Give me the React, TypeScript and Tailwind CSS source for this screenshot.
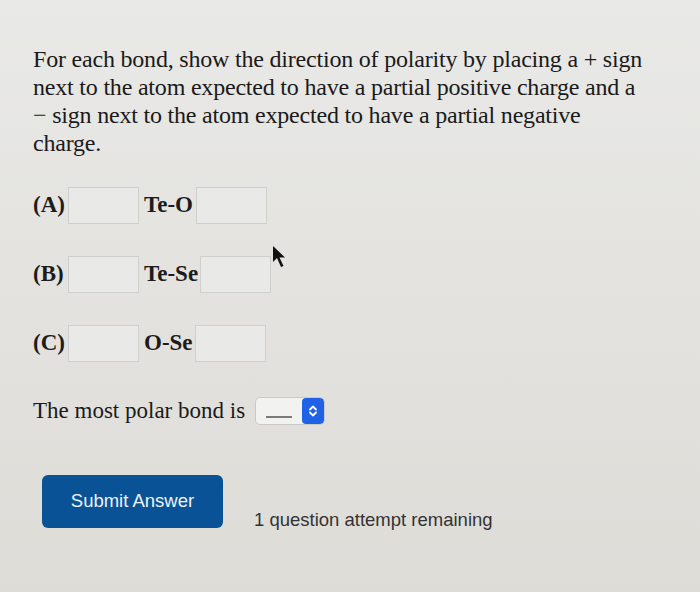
import React from 'react';

const serif = "font-['Liberation_Serif','Times_New_Roman',serif]";
const sans = "font-['Liberation_Sans',Arial,sans-serif]";

const AnswerBox: React.FC = () => (
  <div className="h-[37px] w-[71px] border border-[#cfcfcc] bg-[#e9e9e7]" />
);

const BondRow: React.FC<{ label: string; bond: string; bondWidth: string }> = ({ label, bond, bondWidth }) => (
  <div className="flex items-center">
    <span className={`w-[35px] text-[23px] font-bold text-[#1c1c1c] ${serif}`}>{label}</span>
    <AnswerBox />
    <span className={`${bondWidth} pl-[5px] text-[23px] font-bold text-[#1c1c1c] ${serif}`}>{bond}</span>
    <AnswerBox />
  </div>
);

const App: React.FC = () => {
  return (
    <div className="relative h-[592px] w-[700px] overflow-hidden bg-gradient-to-b from-[#e9e9e7] to-[#dedcd7]">
      <div className="pl-[33px] pt-[45px]">
        {/* Question */}
        <p className={`whitespace-nowrap text-[24px] leading-[28px] tracking-[-0.2px] text-[#1a1a1a] ${serif}`}>
          <span className="block">For each bond, show the direction of polarity by placing a + sign</span>
          <span className="block">next to the atom expected to have a partial positive charge and a</span>
          <span className="block">&minus; sign next to the atom expected to have a partial negative</span>
          <span className="block">charge.</span>
        </p>

        {/* Bonds */}
        <div className="mt-[30px] flex flex-col gap-[32px]">
          <BondRow label="(A)" bond="Te-O" bondWidth="w-[57px]" />
          <BondRow label="(B)" bond="Te-Se" bondWidth="w-[61px]" />
          <BondRow label="(C)" bond="O-Se" bondWidth="w-[56px]" />
        </div>

        {/* Select */}
        <div className="mt-[32px] flex items-center">
          <span className={`text-[23px] text-[#1a1a1a] ${serif}`}>The most polar bond is</span>
          <div className="ml-[10px] flex h-[28px] w-[70px] overflow-hidden rounded-[5px] border border-[#c9c9c6] bg-[#f2f2f0]">
            <div className="flex flex-1 items-end justify-center pb-[6px]">
              <div className="h-[2px] w-[26px] bg-[#7a7a78]" />
            </div>
            <div className="flex w-[22px] items-center justify-center rounded-[4px] bg-[#1f62e6]">
              <svg width="10" height="14" viewBox="0 0 10 14" fill="none" stroke="white" strokeWidth="1.8" strokeLinecap="round" strokeLinejoin="round">
                <path d="M2 5.5 L5 2.5 L8 5.5" />
                <path d="M2 8.5 L5 11.5 L8 8.5" />
              </svg>
            </div>
          </div>
        </div>

        {/* Submit */}
        <div className="mt-[46px] flex items-start pl-[9px]">
          <button className={`h-[53px] w-[181px] rounded-[6px] bg-[#0a5296] text-[18.5px] text-[#eef3f8] ${sans}`}>
            Submit Answer
          </button>
          <span className={`ml-[31px] mt-[34px] text-[18.5px] leading-[21px] text-[#333] ${sans}`}>1 question attempt remaining</span>
        </div>
      </div>

      {/* Mouse pointer */}
      <svg className="absolute left-[272px] top-[245px]" width="16" height="24" viewBox="0 0 16 24">
        <path d="M1 1 L1 17 L5 13 L9 22 L11.5 21 L7.5 12.5 L13 12.5 Z" fill="#111" />
      </svg>
    </div>
  );
};

export default App;
